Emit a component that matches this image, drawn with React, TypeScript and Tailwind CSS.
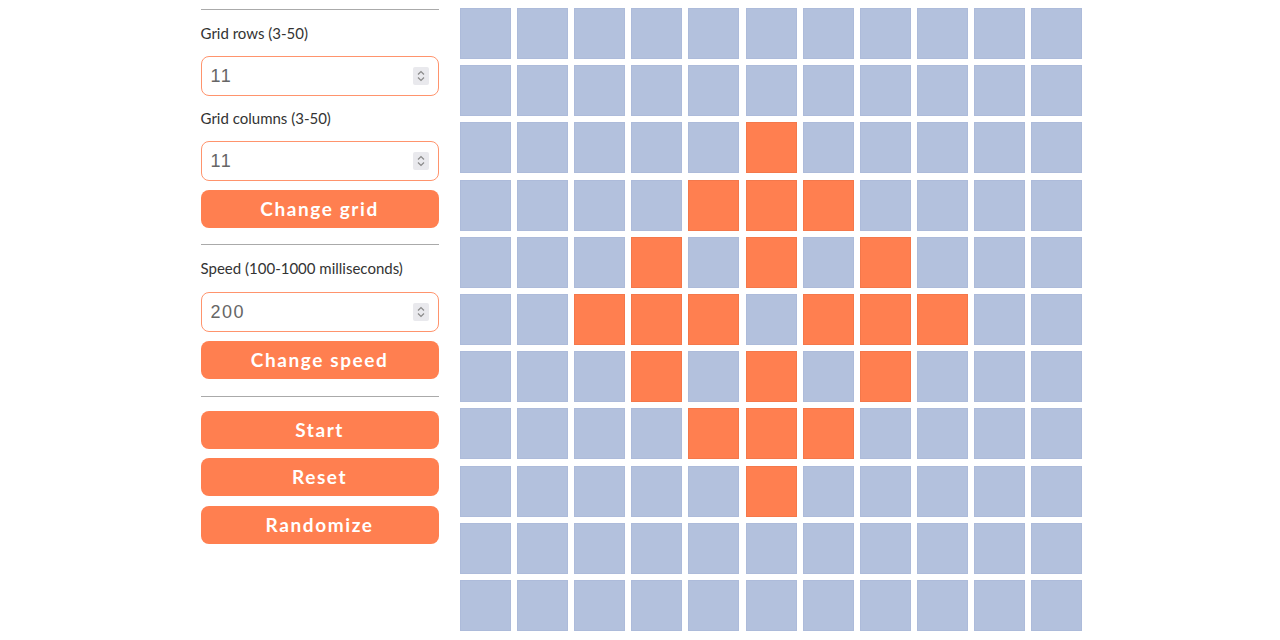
import { useState } from 'react'

const LIVE = new Set([
  '2-5',
  '3-4', '3-5', '3-6',
  '4-3', '4-5', '4-7',
  '5-2', '5-3', '5-4', '5-6', '5-7', '5-8',
  '6-3', '6-5', '6-7',
  '7-4', '7-5', '7-6',
  '8-5'
])

const font = { fontFamily: 'Lato, "Open Sans", sans-serif' }

const Spinner = () => (
  <div className="w-[16px] h-[18px] bg-[#e9e9ed] rounded-[2px] flex items-center justify-center">
    <svg width="10" height="14" viewBox="0 0 10 14" fill="none" stroke="#8a8a8a" strokeWidth="1.2">
      <path d="M2 5.5 L5 2.5 L8 5.5" />
      <path d="M2 8.5 L5 11.5 L8 8.5" />
    </svg>
  </div>
)

const NumberField = ({ value, className }: { value: string; className?: string }) => {
  const [val, setVal] = useState(value)
  return (
    <div
      className={`h-[40px] w-full flex items-center pl-[9px] pr-[9px] border border-[#ff946d] rounded-[8px] bg-white ${className ?? ''}`}
    >
      <input
        value={val}
        onChange={e => setVal(e.target.value)}
        className="flex-1 min-w-0 outline-none text-[18px] text-[#666] tracking-[1.5px] bg-transparent"
        style={{ fontFamily: '"Liberation Sans", Arial, sans-serif' }}
      />
      <Spinner />
    </div>
  )
}

const Button = ({ label, className }: { label: string; className?: string }) => (
  <button
    className={`h-[38px] w-full rounded-[8px] bg-[#ff7f50] text-white text-[19px] font-bold tracking-[1.6px] ${className ?? ''}`}
    style={font}
  >
    {label}
  </button>
)

const Label = ({ text, className }: { text: string; className?: string }) => (
  <div className={`h-[22px] leading-[22px] text-[15px] text-[#333] ${className ?? ''}`} style={font}>
    {text}
  </div>
)

export default function App() {
  const rows = Array.from({ length: 11 }, (_, r) => r)
  const cols = Array.from({ length: 11 }, (_, c) => c)

  return (
    <div className="w-[1280px] h-[640px] bg-white flex justify-center gap-[21px] pl-[3px] overflow-hidden">
      <div className="w-[238px] flex flex-col">
        <div className="mt-[9px] border-t border-[#aaa]" />
        <Label text="Grid rows (3-50)" className="mt-[12px]" />
        <NumberField value="11" className="mt-[12px]" />
        <Label text="Grid columns (3-50)" className="mt-[11px]" />
        <NumberField value="11" className="mt-[12px]" />
        <Button label="Change grid" className="mt-[9px]" />
        <div className="mt-[16px] border-t border-[#aaa]" />
        <Label text="Speed (100-1000 milliseconds)" className="mt-[12px]" />
        <NumberField value="200" className="mt-[13px]" />
        <Button label="Change speed" className="mt-[9px]" />
        <div className="mt-[17px] border-t border-[#aaa]" />
        <Button label="Start" className="mt-[14px]" />
        <Button label="Reset" className="mt-[9px]" />
        <Button label="Randomize" className="mt-[10px]" />
      </div>
      <div className="mt-[8px] grid grid-cols-[repeat(11,51px)] auto-rows-[51px] gap-x-[6.2px] gap-y-[6.2px] self-start">
        {rows.map(r =>
          cols.map(c =>
            LIVE.has(`${r}-${c}`) ? (
              <div key={`${r}-${c}`} className="bg-[#ff7f50] border border-[#f4784b]" />
            ) : (
              <div key={`${r}-${c}`} className="bg-[#b3c1dd] border border-[#adbbda]" />
            )
          )
        )}
      </div>
    </div>
  )
}
